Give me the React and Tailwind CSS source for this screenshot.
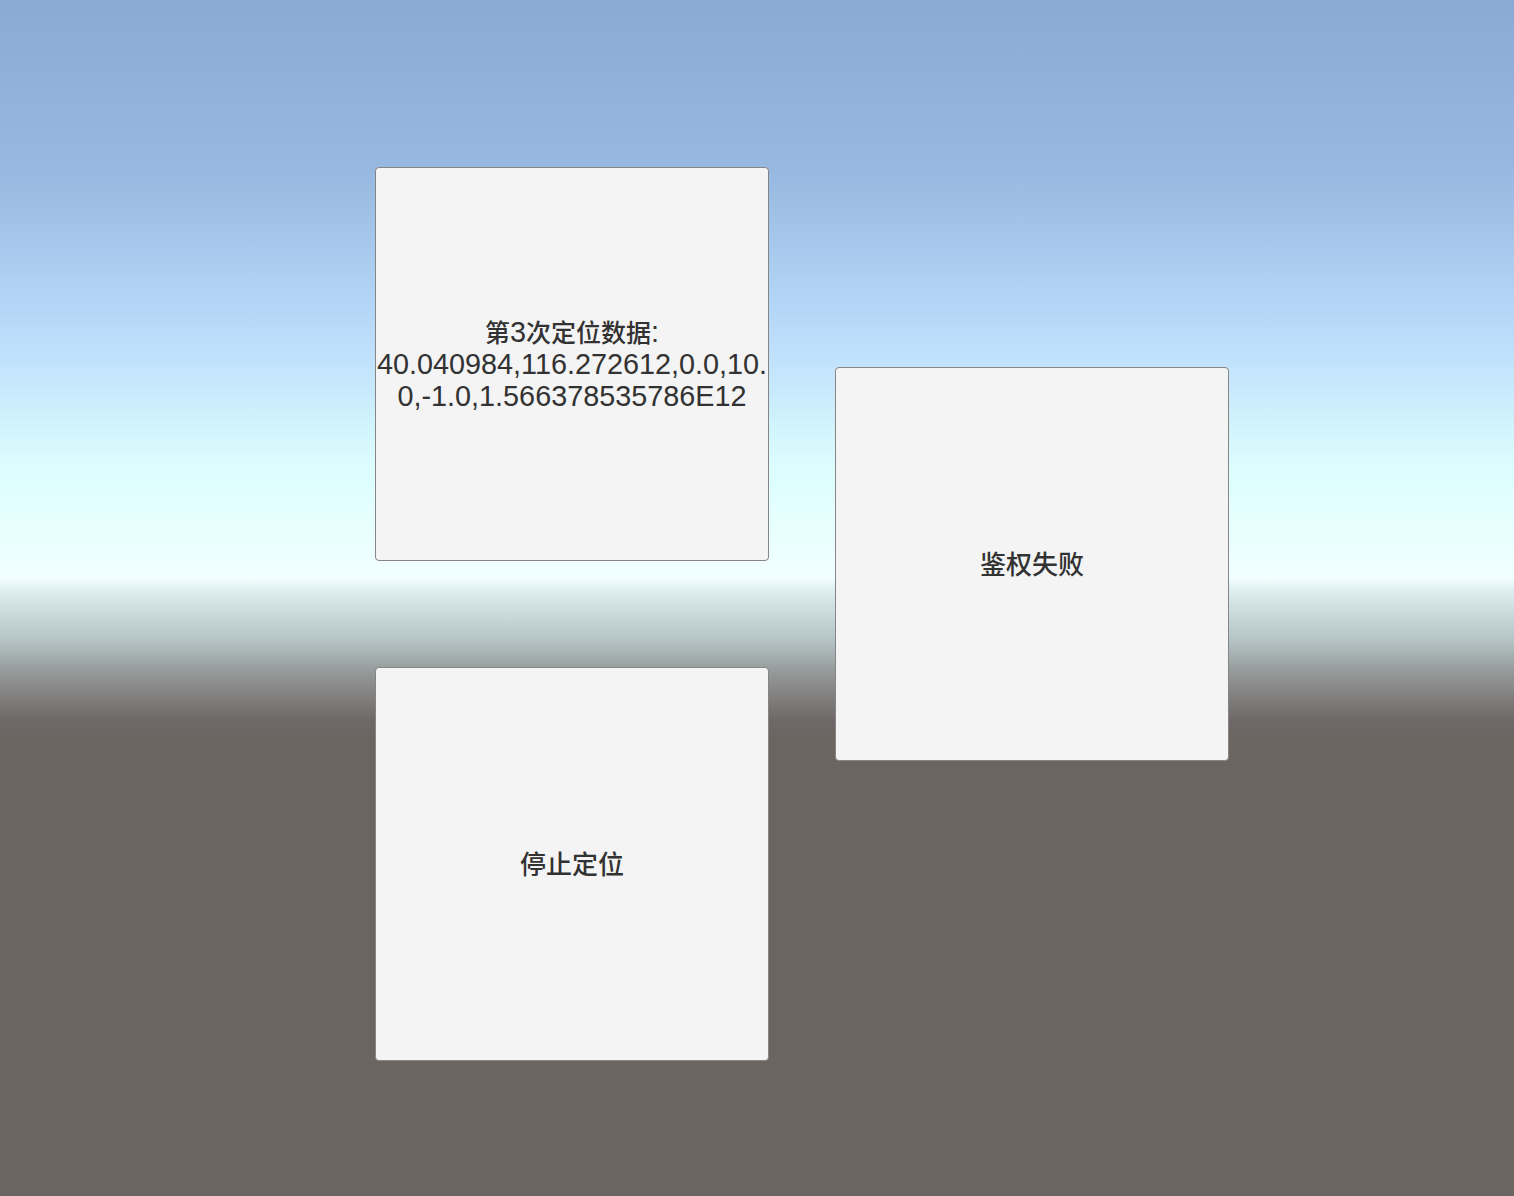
const SANS = "font-['Liberation_Sans','Noto_Sans_CJK_SC',sans-serif]";

function PanelButton({ children }) {
  return (
    <button
      type="button"
      className={`w-[394px] h-[394px] shrink-0 flex items-center justify-center text-center rounded-[4px] border border-[#858585] bg-[#f4f4f4] text-[#323232] ${SANS}`}
    >
      {children}
    </button>
  );
}

function Cjk({ children }) {
  return <span className="font-['Noto_Sans_CJK_SC',sans-serif] font-medium text-[25px]">{children}</span>;
}

export default function App() {
  return (
    <div className="w-[1514px] h-[1196px] overflow-hidden bg-[linear-gradient(to_bottom,#8aaad3_0px,#97b8e0_170px,#b2d4f5_300px,#c1e2fd_360px,#d0f2fc_420px,#dcfefe_470px,#eaffff_540px,#f2ffff_578px,#dcecef_592px,#b5c4c5_640px,#979c9c_670px,#7f7c7b_700px,#6d6866_722px,#6b6562_740px,#6b6562_1196px)]">
      <div className="flex gap-[66px] pl-[375px] pt-[167px]">
        <div className="flex flex-col gap-[106px]">
          <PanelButton>
            <div className="text-[28.8px] leading-[32px] w-[394px] -mt-[2px]">
              <Cjk>第</Cjk>3<Cjk>次定位数据</Cjk>:
              <br />
              40.040984,116.272612,0.0,10.
              <br />
              0,-1.0,1.566378535786E12
            </div>
          </PanelButton>
          <PanelButton>
            <span className="font-['Noto_Sans_CJK_SC',sans-serif] font-medium text-[26px] leading-[32px] -mt-[2px]">停止定位</span>
          </PanelButton>
        </div>
        <div className="pt-[200px]">
          <PanelButton>
            <span className="font-['Noto_Sans_CJK_SC',sans-serif] font-medium text-[26px] leading-[32px] -mt-[2px]">鉴权失败</span>
          </PanelButton>
        </div>
      </div>
    </div>
  );
}
